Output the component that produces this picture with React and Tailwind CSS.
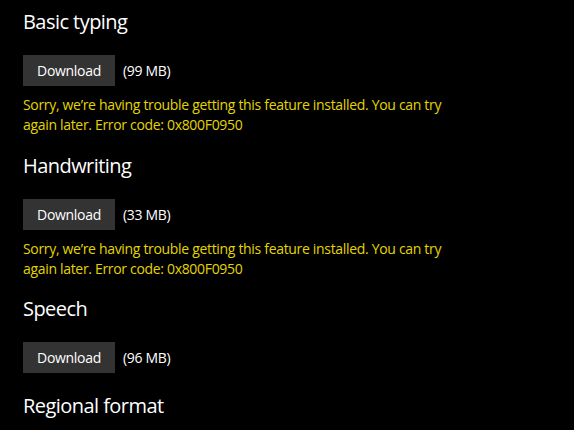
const FONT = { fontFamily: '"Open Sans", "Noto Sans", sans-serif' }

const SECTIONS = [
  { title: 'Basic typing', size: '(99 MB)', error: true, mb: 'mb-[17px]' },
  { title: 'Handwriting', size: '(33 MB)', error: true, mb: 'mb-[16px]' },
  { title: 'Speech', size: '(96 MB)', error: false, mb: 'mb-[19px]' },
]

function ErrorText() {
  return (
    <div className="mt-[9px] text-[14px] leading-[20px] tracking-[-0.32px] text-[#e3d500]">
      <div>Sorry, we’re having trouble getting this feature installed. You can try</div>
      <div>again later. Error code: 0x800F0950</div>
    </div>
  )
}

function Section({ section }) {
  return (
    <div className={section.mb}>
      <h2 className="text-[20px] leading-[28px] tracking-[-0.55px] text-white">{section.title}</h2>
      <div className="mt-[19px] flex items-center gap-2">
        <button className="h-[31px] w-[92px] bg-[#333333] text-[14px] tracking-[-0.3px] text-white">Download</button>
        <span className="text-[14px] tracking-[-0.3px] text-white">{section.size}</span>
      </div>
      {section.error && <ErrorText />}
    </div>
  )
}

export default function App() {
  return (
    <div className="min-h-[430px] w-[574px] bg-black pl-[23px] pt-[8px] overflow-hidden" style={FONT}>
      {SECTIONS.map((s) => (
        <Section key={s.title} section={s} />
      ))}
      <h2 className="text-[20px] leading-[28px] tracking-[-0.55px] text-white">Regional format</h2>
    </div>
  )
}
